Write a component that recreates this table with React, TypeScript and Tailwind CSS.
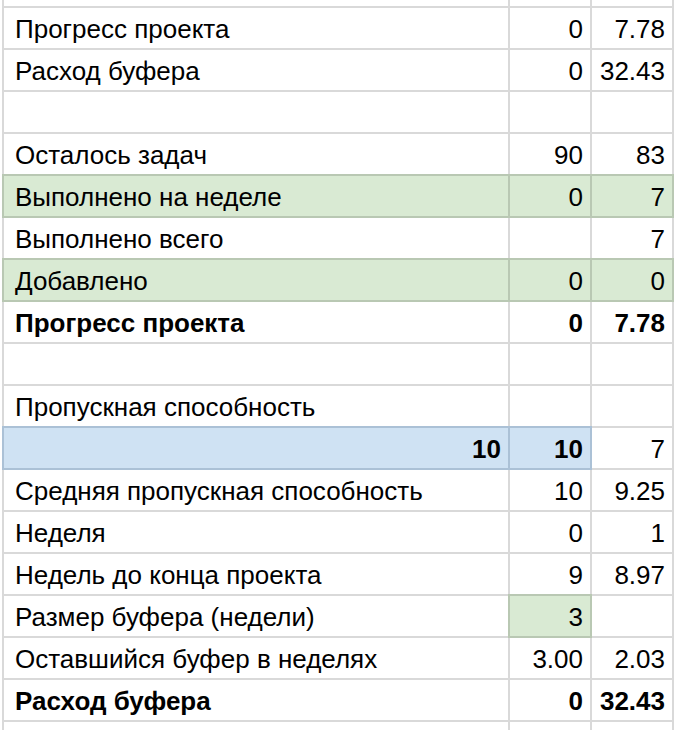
import React from 'react';

type Fill = 'green' | 'blue' | undefined;

type Cell = {
  text?: string;
  bold?: boolean;
  right?: boolean;
  fill?: Fill;
};

type Row = [Cell, Cell, Cell];

const t = (text: string, extra: Partial<Cell> = {}): Cell => ({ text, ...extra });
const n = (text: string, extra: Partial<Cell> = {}): Cell => ({ text, right: true, ...extra });
const e: Cell = {};

const rows: Row[] = [
  [t('Прогресс проекта'), n('0'), n('7.78')],
  [t('Расход буфера'), n('0'), n('32.43')],
  [e, e, e],
  [t('Осталось задач'), n('90'), n('83')],
  [t('Выполнено на неделе', { fill: 'green' }), n('0', { fill: 'green' }), n('7', { fill: 'green' })],
  [t('Выполнено всего'), e, n('7')],
  [t('Добавлено', { fill: 'green' }), n('0', { fill: 'green' }), n('0', { fill: 'green' })],
  [t('Прогресс проекта', { bold: true }), n('0', { bold: true }), n('7.78', { bold: true })],
  [e, e, e],
  [t('Пропускная способность'), e, e],
  [n('10', { bold: true, fill: 'blue' }), n('10', { bold: true, fill: 'blue' }), n('7')],
  [t('Средняя пропускная способность'), n('10'), n('9.25')],
  [t('Неделя'), n('0'), n('1')],
  [t('Недель до конца проекта'), n('9'), n('8.97')],
  [t('Размер буфера (недели)'), n('3', { fill: 'green' }), e],
  [t('Оставшийся буфер в неделях'), n('3.00'), n('2.03')],
  [t('Расход буфера', { bold: true }), n('0', { bold: true }), n('32.43', { bold: true })],
];

const widths = ['w-[506px]', 'w-[82px]', 'w-[82px]'];
const fillWidths = ['w-[508px]', 'w-[84px]', 'w-[84px]'];

function SheetCell({ cell, col }: { cell: Cell; col: number }) {
  const base = 'flex items-center pt-[2px] border-r-2 border-b-2 text-[26px] text-black whitespace-nowrap';
  const align = cell.right ? 'justify-end pr-[7px]' : 'justify-start pl-[11px]';
  const weight = cell.bold ? 'font-bold' : 'font-normal';

  if (cell.fill) {
    const colors =
      cell.fill === 'green'
        ? 'bg-[#d9ead3] border-[#b9c8b3]'
        : 'bg-[#cfe2f3] border-[#abc1d6]';
    return (
      <div
        className={`${base} ${align} ${weight} ${colors} ${fillWidths[col]} h-[44px] -mt-[2px] -ml-[2px] border-t-2 border-l-2 relative`}
      >
        {cell.text}
      </div>
    );
  }

  return (
    <div className={`${base} ${align} ${weight} ${widths[col]} h-[42px] border-[#d9d9d9]`}>
      {cell.text}
    </div>
  );
}

export default function App() {
  return (
    <div className="w-[680px] h-[730px] overflow-hidden bg-white font-['Liberation_Sans',Arial,sans-serif]">
      <div className="ml-[2px] w-[672px] border-l-2 border-[#d9d9d9]">
        {/* partial row cut off at the top */}
        <div className="flex">
          {widths.map((w, i) => (
            <div key={i} className={`${w} h-[8px] border-r-2 border-b-2 border-[#d9d9d9]`} />
          ))}
        </div>
        {rows.map((row, r) => (
          <div key={r} className="flex">
            {row.map((cell, c) => (
              <SheetCell key={c} cell={cell} col={c} />
            ))}
          </div>
        ))}
        {/* partial row cut off at the bottom */}
        <div className="flex">
          {widths.map((w, i) => (
            <div key={i} className={`${w} h-[20px] border-r-2 border-[#d9d9d9]`} />
          ))}
        </div>
      </div>
    </div>
  );
}
